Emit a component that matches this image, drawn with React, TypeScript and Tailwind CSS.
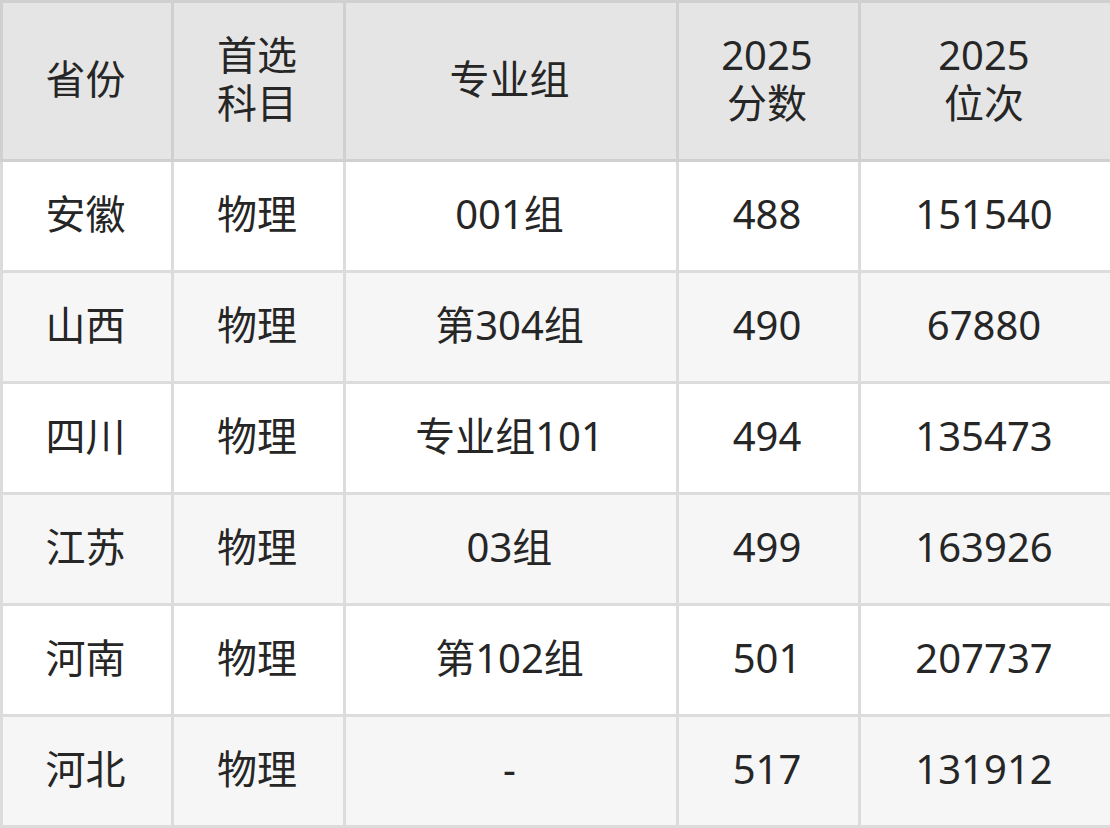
const rows = [
  ['安徽', '物理', '001组', '488', '151540'],
  ['山西', '物理', '第304组', '490', '67880'],
  ['四川', '物理', '专业组101', '494', '135473'],
  ['江苏', '物理', '03组', '499', '163926'],
  ['河南', '物理', '第102组', '501', '207737'],
  ['河北', '物理', '-', '517', '131912'],
];

export default function App() {
  return (
    <div
      className="w-[1110px] h-[828px] overflow-hidden bg-white text-[#262626]"
      style={{ fontFamily: '"Noto Sans", "Noto Sans CJK SC", sans-serif' }}>
      <table className="w-[1110px] table-fixed border-collapse text-center text-[40px] leading-[48px]">
        <colgroup>
          <col className="w-[171px]" />
          <col className="w-[172px]" />
          <col className="w-[333px]" />
          <col className="w-[182px]" />
          <col className="w-[252px]" />
        </colgroup>
        <thead>
          <tr className="h-[159px] bg-[#e5e5e5]">
            <th className="border-[3px] border-[#d0d0d0] pr-[3px] pb-[5px] font-normal">省份</th>
            <th className="border-[3px] border-[#d0d0d0] pr-[3px] pb-[5px] font-normal">
              首选
              <br />
              科目
            </th>
            <th className="border-[3px] border-[#d0d0d0] pr-[3px] pb-[5px] font-normal">专业组</th>
            <th className="border-[3px] border-[#d0d0d0] pr-[3px] pb-[5px] font-normal">
              2025
              <br />
              分数
            </th>
            <th className="border-[3px] border-[#d0d0d0] pr-[3px] pb-[5px] font-normal">
              2025
              <br />
              位次
            </th>
          </tr>
        </thead>
        <tbody>
          {rows.map((row, i) => (
            <tr
              key={row[0]}
              className={i % 2 === 0 ? 'h-[111px] bg-white' : 'h-[111px] bg-[#f6f6f6]'}>
              {row.map((cell, j) => (
                <td key={j} className="border-[3px] border-[#dcdcdc] pr-[3px] pb-[5px]">
                  {cell}
                </td>
              ))}
            </tr>
          ))}
        </tbody>
      </table>
    </div>
  );
}
